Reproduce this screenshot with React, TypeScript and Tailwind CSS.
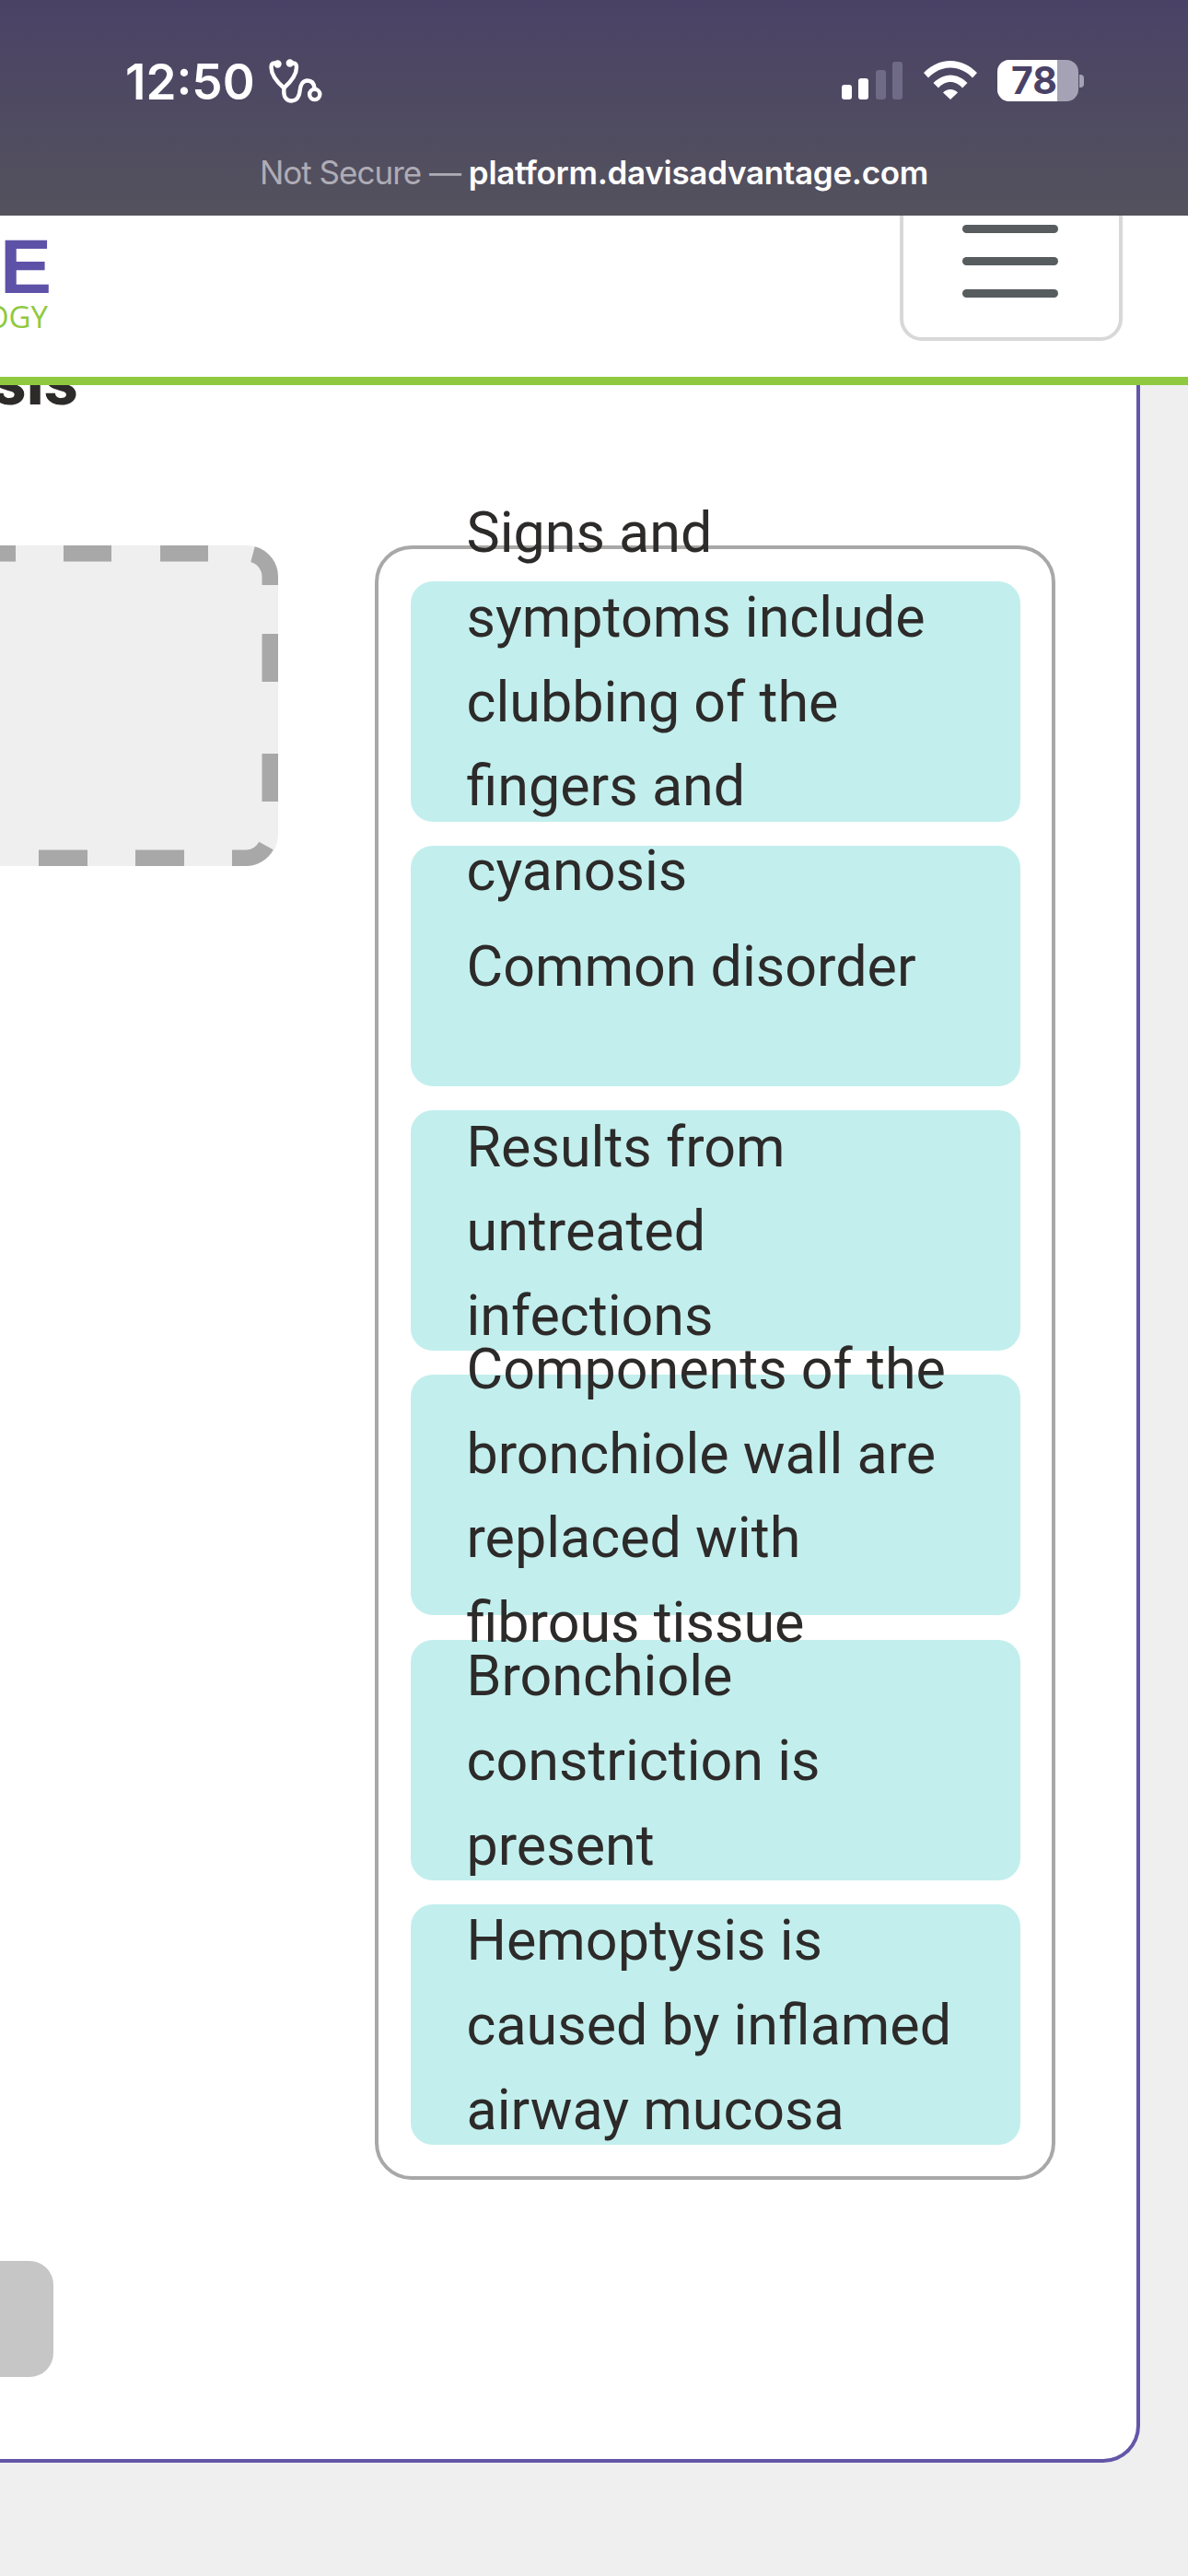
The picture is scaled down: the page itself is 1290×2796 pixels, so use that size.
/**
 * Drag-and-drop exercise, seen on a phone with the page scrolled sideways.
 */
const CARDS = [
  "Signs and symptoms include clubbing of the fingers and cyanosis",
  "Common disorder",
  "Results from untreated infections",
  "Components of the bronchiole wall are replaced with fibrous tissue",
  "Bronchiole constriction is present",
  "Hemoptysis is caused by inflamed airway mucosa",
];

function Stethoscope() {
  return (
    <svg width="60" height="48" viewBox="0 0 60 48" fill="none" stroke="white" strokeWidth="4.4" strokeLinecap="round" strokeLinejoin="round">
      <path d="M9 4.5H8Q4.5 4.5 4.5 9C4.5 17 12 26 18.3 31.5C24.5 26 32 17 32 9Q32 4.5 28.5 4.5H27" />
      <path d="M18.3 31.5V36C18.3 42 22 45.5 26.5 45.5C32 45.5 35 41 35.5 35C36 28 39 23.5 44 23.5C48 23.5 51 26.5 51.7 32" />
      <circle cx="51.7" cy="38.5" r="5.6" />
      <circle cx="11.5" cy="5.5" r="2" fill="white" />
      <circle cx="24.8" cy="4.5" r="2" fill="white" />
    </svg>
  );
}

function Wifi() {
  return (
    <svg width="58" height="42" viewBox="0 0 58 42" fill="white">
      <path d="M0 13C8 5 18 0 29 0C40 0 50 5 58 13L53 18.5C46.5 11.5 38 7.5 29 7.5C20 7.5 11.5 11.5 5 18.5Z" />
      <path d="M10.5 24C15.5 19 22 15.5 29 15.5C36 15.5 42.5 19 47.5 24L42 29.5C38.5 25.5 34 23 29 23C24 23 19.5 25.5 16 29.5Z" />
      <path d="M21 34.5C23 32.5 26 31 29 31C32 31 35 32.5 37 34.5L29 42Z" />
    </svg>
  );
}

function StatusBar() {
  return (
    <div className="h-[234px] bg-gradient-to-b from-[#4a4266] to-[#54525d] font-['Inter',sans-serif]">
      <div className="flex h-[133px] items-end pb-[25px] pl-[136px] pr-[113px]">
        <span className="mb-[-7px] text-[53px] leading-[52px] font-semibold text-white">12:50</span>
        <span className="ml-[13px] mb-[-4px]">
          <Stethoscope />
        </span>
        <div className="ml-auto flex items-end">
          <div className="flex items-end gap-[7.5px]">
            <div className="h-[16px] w-[11px] rounded-[3px] bg-white" />
            <div className="h-[23px] w-[11px] rounded-[3px] bg-white" />
            <div className="h-[32px] w-[11px] rounded-[3px] bg-[#6f6a85]" />
            <div className="h-[41px] w-[11px] rounded-[3px] bg-[#6f6a85]" />
          </div>
          <div className="ml-[23px]">
            <Wifi />
          </div>
          <div className="ml-[22px] mb-[-2px] flex items-center">
            <div className="flex h-[45px] w-[88px] overflow-hidden rounded-[13px] bg-[#a5a2b5]">
              <div className="flex w-[65px] items-center justify-end bg-white text-[41px] leading-none font-bold text-[#4a4266]">
                78
              </div>
            </div>
            <div className="ml-[1px] h-[14px] w-[5px] rounded-r-[4px] bg-[#a5a2b5]" />
          </div>
        </div>
      </div>
      <p className="mt-[33px] text-center text-[35px] leading-[42px] tracking-[-1px] text-[#aeacb5]">
        Not Secure — <span className="font-semibold tracking-[-0.3px] text-white">platform.davisadvantage.com</span>
      </p>
    </div>
  );
}

function Header() {
  return (
    <header className="relative z-10 flex h-[184px] overflow-hidden border-b-[9px] border-[#8fc93f] bg-white">
      <div className="mt-[13px] flex w-[56px] flex-col items-end whitespace-nowrap">
        <span className="font-['Liberation_Sans',sans-serif] text-[84px] leading-[84px] font-bold text-[#5e52a8]">E</span>
        <span className="mr-[4px] mt-[-3px] font-['Open_Sans',sans-serif] text-[33px] leading-[32px] text-[#8fc93f]">OGY</span>
      </div>
      <div className="ml-auto mr-[71px] mt-[-40px] flex h-[176px] w-[242px] flex-col items-center gap-[26px] rounded-[24px] border-[4px] border-[#d8d8d8] pt-[46px] pr-[2px]">
        <div className="h-[9px] w-[104px] rounded-full bg-[#575c5f]" />
        <div className="h-[9px] w-[104px] rounded-full bg-[#575c5f]" />
        <div className="h-[9px] w-[104px] rounded-full bg-[#575c5f]" />
      </div>
    </header>
  );
}

// The dashes are uneven along each side, so they are listed one by one
function DropZone() {
  return (
    <div className="relative h-[348px] w-[302px] rounded-r-[34px] bg-[#efefef]">
      <svg className="absolute inset-0" width="302" height="348" viewBox="0 0 302 348" fill="none" stroke="#a8a8a8" strokeWidth="17.5">
        <path d="M0 8.75H17M69 8.75H121M174 8.75H226" />
        <path d="M274.5 9.6A25.25 25.25 0 0 1 293.25 34V43" />
        <path d="M293.25 96V148M293.25 226V278" />
        <path d="M289 326A25.25 25.25 0 0 1 268 339.25H252" />
        <path d="M200 339.25H147M95 339.25H42" />
      </svg>
    </div>
  );
}

// Text runs past its card on purpose; relative keeps it above the next card
function Card({ text }: { text: string }) {
  return (
    <div className="flex h-[261px] items-center rounded-[24px] bg-[#c2efed] pl-[61px] pr-[70px] pt-[3px]">
      <p className="relative">{text}</p>
    </div>
  );
}

export default function App() {
  return (
    <div className="h-[2796px] w-[1290px] overflow-hidden bg-[#efefef]">
      <StatusBar />
      <Header />

      <main className="h-[2294px] w-[1238px] rounded-br-[40px] border-r-[4px] border-b-[4px] border-[#6356a8] bg-white font-['Roboto',sans-serif] text-[#2d2a2a]">
        <div className="mt-[-39px] flex w-[85px] justify-end whitespace-nowrap text-[72px] leading-[72px] font-extrabold">
          Bronchiectasis
        </div>

        <div className="mt-[141px] flex items-start">
          <DropZone />
          <div className="ml-[105px] flex w-[739px] flex-col gap-[26.3px] rounded-[40px] border-[4.5px] border-[#a8a8a8] p-[34.5px] text-[61px] leading-[91.7px]">
            {CARDS.map((c) => (
              <Card key={c} text={c} />
            ))}
          </div>
        </div>

        <div className="mt-[88px] h-[126px] w-[58px] rounded-r-[26px] bg-[#c6c6c6]" />
      </main>
    </div>
  );
}
